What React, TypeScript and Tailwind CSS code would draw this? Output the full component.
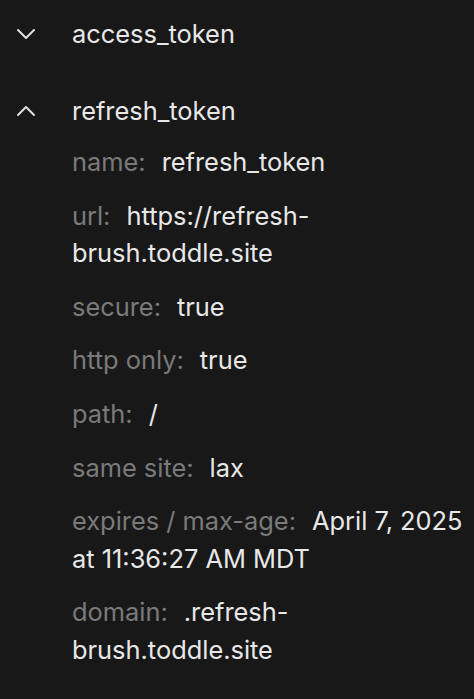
import React from "react";
import { ChevronDown, ChevronUp } from "lucide-react";

const fields: { label: string; value: string }[] = [
  { label: "name:", value: "refresh_token" },
  { label: "url:", value: "https://refresh-brush.toddle.site" },
  { label: "secure:", value: "true" },
  { label: "http only:", value: "true" },
  { label: "path:", value: "/" },
  { label: "same site:", value: "lax" },
  { label: "expires / max-age:", value: "April 7, 2025 at 11:36:27 AM MDT" },
  { label: "domain:", value: ".refresh-brush.toddle.site" },
];

export default function App() {
  return (
    <div
      className="w-[474px] h-[699px] bg-[#181818] text-[#e8e8e8] overflow-hidden"
      style={{ fontFamily: "Inter, 'Noto Sans', sans-serif" }}
    >
      {/* collapsed cookie */}
      <div className="flex items-center h-[37px] mt-[15px] text-[25.4px] leading-[37px]">
        <div className="w-[72px] flex justify-center pr-[20px]">
          <ChevronDown size={32} strokeWidth={1.5} className="text-[#e0e0e0]" />
        </div>
        <span>access_token</span>
      </div>

      {/* expanded cookie */}
      <div className="flex items-center h-[37px] mt-[40px] text-[25.4px] leading-[37px]">
        <div className="w-[72px] flex justify-center pr-[20px]">
          <ChevronUp size={32} strokeWidth={1.5} className="text-[#e0e0e0]" />
        </div>
        <span>refresh_token</span>
      </div>

      <div className="pl-[72px] pr-[8px] mt-[14px] flex flex-col gap-[16px] text-[25.4px] leading-[37.6px]">
        {fields.map((f) => (
          <div key={f.label} className="break-words">
            <span className="text-[#7a7a7a] mr-[16px]">{f.label}</span>
            <span>{f.value}</span>
          </div>
        ))}
      </div>
    </div>
  );
}
